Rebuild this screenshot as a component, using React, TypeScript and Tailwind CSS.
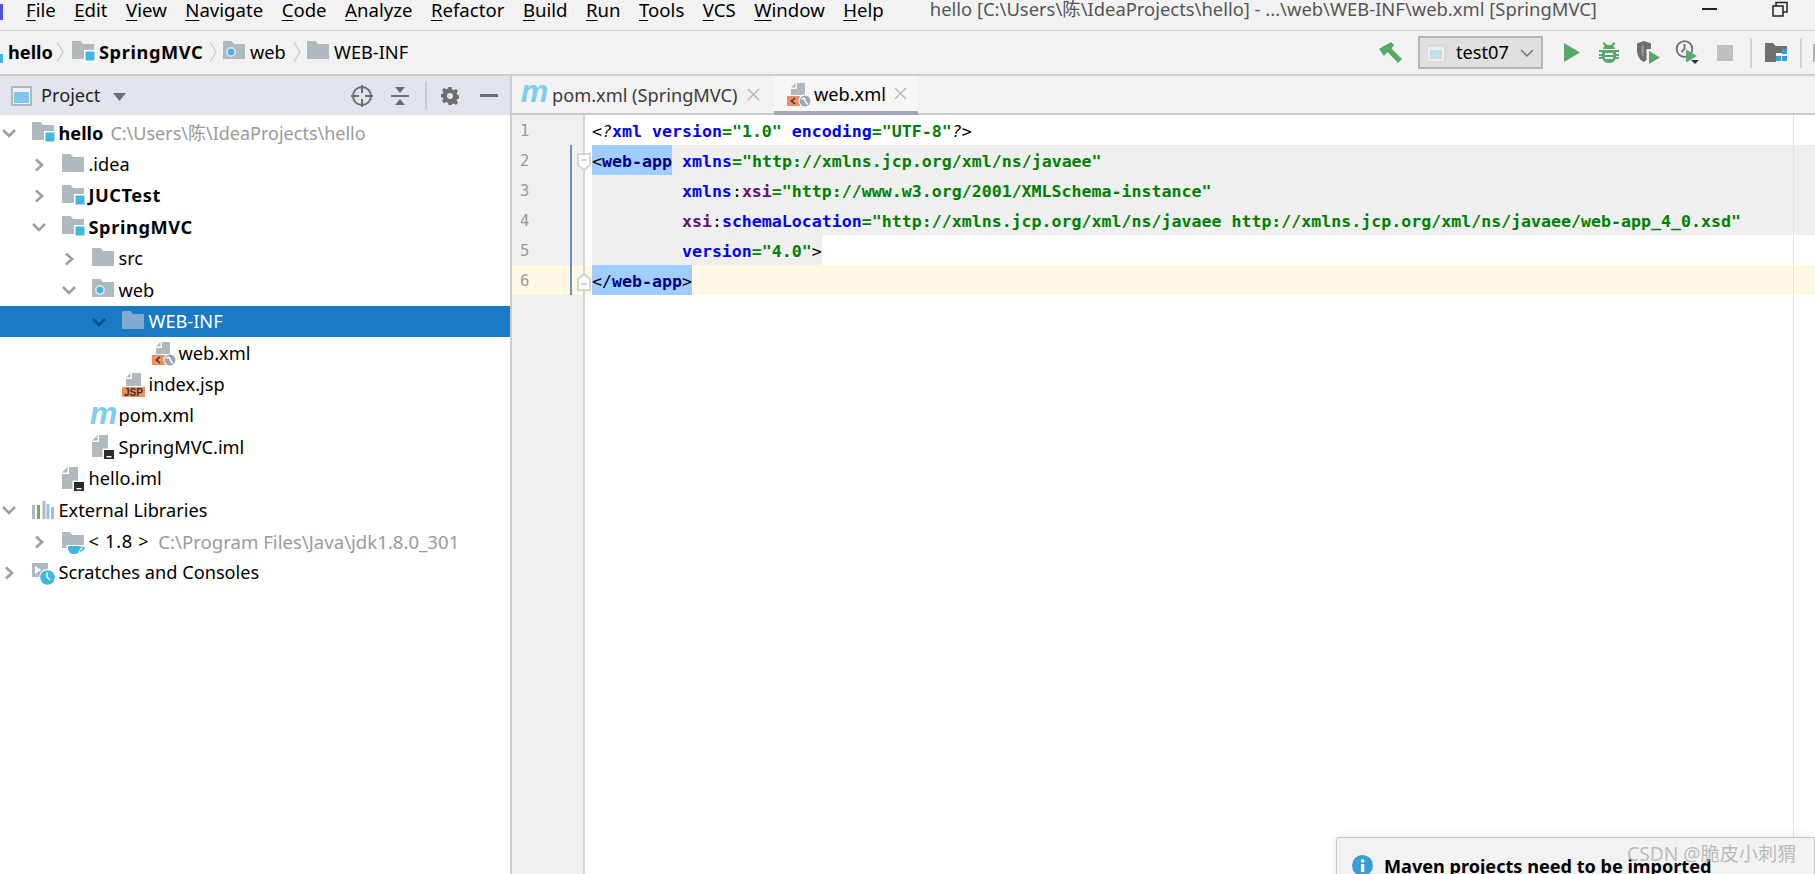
import React from "react";

const FolderPath = "M0 1a1 1 0 0 1 1-1h7.5l2.5 3h11v15H0z";

function Folder({ kind, fill = "#aeb9c0" }: { kind?: "module" | "web"; fill?: string }) {
  return (
    <svg width="25" height="22" viewBox="0 0 25 22" className="shrink-0">
      <path d={FolderPath} fill={fill} />
      {kind === "module" && (
        <>
          <rect x="12" y="9" width="13" height="13" fill="#fff" />
          <rect x="13.5" y="10.5" width="9" height="9" fill="#40b6e0" />
        </>
      )}
      {kind === "web" && (
        <>
          <circle cx="8" cy="11" r="5" fill="#d9e2e8" />
          <circle cx="8" cy="11" r="3.2" fill="#40b6e0" />
        </>
      )}
    </svg>
  );
}

function Chevron({ open, color = "#9aa1a6" }: { open?: boolean; color?: string }) {
  return (
    <svg width="14" height="14" viewBox="0 0 14 14" className="shrink-0">
      {open ? (
        <path d="M1 4l6 6 6-6" stroke={color} strokeWidth="2.6" fill="none" />
      ) : (
        <path d="M4 1.5l6 5.5-6 5.5" stroke={color} strokeWidth="2.6" fill="none" />
      )}
    </svg>
  );
}

function XmlFile() {
  return (
    <svg width="25" height="26" viewBox="0 0 25 26" className="shrink-0">
      <path d="M10 2h8v12H4V8h6z" fill="#aeb9c0" />
      <path d="M4 6.500L8.500 2v4.500z" fill="#aeb9c0" />
      <rect x="0" y="15" width="13" height="10" fill="#f08d63" />
      <path d="M8 17l-3.500 3 3.500 3" stroke="#3b3b3b" strokeWidth="1.600" fill="none" />
      <circle cx="18" cy="20" r="6.500" fill="#fff" />
      <circle cx="18" cy="20" r="5.500" fill="#9aa7b0" />
      <path d="M14.500 18.500c2-2.500 3.500-.5 3.500 1s2 2 2.500 4" stroke="#fff" strokeWidth="1.500" fill="none" />
    </svg>
  );
}

function JspFile() {
  return (
    <svg width="24" height="26" viewBox="0 0 24 26" className="shrink-0">
      <path d="M10 1h9v13H4V7h6z" fill="#aeb9c0" />
      <path d="M4 5.500L8.500 1v4.500z" fill="#aeb9c0" />
      <rect x="0" y="15" width="23" height="10" fill="#f08d63" />
      <text x="11.500" y="24" textAnchor="middle" fontSize="10" fontWeight="700" fontFamily="Liberation Sans" fill="#3d3026">JSP</text>
    </svg>
  );
}

function ImlFile() {
  return (
    <svg width="22" height="24" viewBox="0 0 22 24" className="shrink-0">
      <path d="M7 0h9v22H0V7h7z" fill="#aeb9c0" />
      <path d="M0 5.500L5.500 0v5.500z" fill="#aeb9c0" />
      <rect x="10.500" y="13.500" width="11.500" height="10.500" fill="#fff" />
      <rect x="12" y="15" width="10" height="9.500" fill="#2a2a2a" />
      <rect x="14.500" y="21" width="5" height="1.400" fill="#fff" />
    </svg>
  );
}

function MavenIcon() {
  return (
    <span className="w-[23px] h-[22px] shrink-0 flex items-center justify-center font-['Liberation_Sans'] italic font-bold text-[31px] leading-none text-[#7fcdec] -translate-y-[3px]">
      m
    </span>
  );
}

function LibIcon() {
  return (
    <svg width="22" height="18" viewBox="0 0 22 18" className="shrink-0">
      <rect x="0" y="4" width="3" height="14" fill="#aeb9c0" />
      <rect x="5" y="4" width="3" height="14" fill="#6bb04e" />
      <rect x="10.500" y="0" width="3" height="18" fill="#aeb9c0" />
      <rect x="14.500" y="3" width="3" height="15" fill="#8fc7e4" />
      <rect x="19" y="6" width="3" height="12" fill="#aeb9c0" />
    </svg>
  );
}

function JdkIcon() {
  return (
    <svg width="24" height="26" viewBox="0 0 24 26" className="shrink-0">
      <path d="M0 3h8l2.500 3H22v13H0z" fill="#aeb9c0" />
      <rect x="4.500" y="16" width="19.500" height="10" fill="#fff" />
      <path d="M6 17h12v2c0 3-2 6-5 6h-2c-3 0-5-3-5-6z" fill="#40b6e0" />
      <path d="M18 18.500h3.500c1 0 1 2.500-3.500 3.500" stroke="#40b6e0" strokeWidth="1.500" fill="none" />
    </svg>
  );
}

function ScratchIcon() {
  return (
    <svg width="25" height="26" viewBox="0 0 25 26" className="shrink-0">
      <path d="M0 3h16v14H0z" fill="#aeb9c0" />
      <path d="M3 6l6 4-6 4z" fill="#fff" />
      <circle cx="15.500" cy="17.500" r="8.500" fill="#fff" />
      <circle cx="15.500" cy="17.500" r="7.300" fill="#40b6e0" />
      <path d="M15 12.500V17l3 3" stroke="#fff" strokeWidth="1.400" fill="none" />
    </svg>
  );
}

type Row = {
  pl: string;
  chevron?: "open" | "closed";
  icon: React.ReactNode;
  name: string;
  nameClass?: string;
  hint?: string;
  hintClass?: string;
  selected?: boolean;
};

const rows: Row[] = [
  { pl: "pl-[2px]", chevron: "open", icon: <Folder kind="module" />, name: "hello", nameClass: "font-bold", hint: "C:\\Users\\陈\\IdeaProjects\\hello", hintClass: "ml-[7px] text-[18px]" },
  { pl: "pl-[32px]", chevron: "closed", icon: <Folder />, name: ".idea" },
  { pl: "pl-[32px]", chevron: "closed", icon: <Folder kind="module" />, name: "JUCTest", nameClass: "font-bold tracking-[0.55px]" },
  { pl: "pl-[32px]", chevron: "open", icon: <Folder kind="module" />, name: "SpringMVC", nameClass: "font-bold tracking-[0.6px]" },
  { pl: "pl-[62px]", chevron: "closed", icon: <Folder />, name: "src" },
  { pl: "pl-[62px]", chevron: "open", icon: <Folder kind="web" />, name: "web" },
  { pl: "pl-[92px]", chevron: "open", icon: <Folder fill="#82a9cf" />, name: "WEB-INF", selected: true },
  { pl: "pl-[122px]", icon: <XmlFile />, name: "web.xml" },
  { pl: "pl-[92px]", icon: <JspFile />, name: "index.jsp" },
  { pl: "pl-[62px]", icon: <MavenIcon />, name: "pom.xml" },
  { pl: "pl-[62px]", icon: <ImlFile />, name: "SpringMVC.iml" },
  { pl: "pl-[32px]", icon: <ImlFile />, name: "hello.iml" },
  { pl: "pl-[2px]", chevron: "open", icon: <LibIcon />, name: "External Libraries" },
  { pl: "pl-[32px]", chevron: "closed", icon: <JdkIcon />, name: "< 1.8 >", nameClass: "tracking-[0.7px]", hint: "C:\\Program Files\\Java\\jdk1.8.0_301", hintClass: "ml-[9px] text-[18.6px]" },
  { pl: "pl-[2px]", chevron: "closed", icon: <ScratchIcon />, name: "Scratches and Consoles" },
];

const menus: [string, string][] = [
  ["F", "ile"], ["E", "dit"], ["V", "iew"], ["N", "avigate"], ["C", "ode"], ["A", "nalyze"],
  ["R", "efactor"], ["B", "uild"], ["R", "un"], ["T", "ools"], ["V", "CS"], ["W", "indow"], ["H", "elp"],
];

const N = "text-[#000080] font-bold";
const A = "text-[#0000ff] font-bold";
const S = "text-[#008000] font-bold";
const P = "text-[#660e7a] font-bold";
const K = "text-black";

function T({ c, children }: { c: string; children: React.ReactNode }) {
  return <span className={`relative top-[2px] ${c}`}>{children}</span>;
}

function Sep() {
  return (
    <svg width="8" height="22" viewBox="0 0 8 22" className="shrink-0">
      <path d="M1 1l6 10-6 10" stroke="#c8c8c8" strokeWidth="1.200" fill="none" />
    </svg>
  );
}

function CodeRow({
  num,
  gutterBg = "bg-[#f0f0f0]",
  bg = "bg-white",
  children,
}: {
  num: number;
  gutterBg?: string;
  bg?: string;
  children: React.ReactNode;
}) {
  return (
    <div className="flex h-[30px]">
      <div className={`w-[71px] shrink-0 pl-[8px] pt-[3px] flex items-center font-['DejaVu_Sans_Mono'] text-[15.5px] text-[#999999] ${gutterBg}`}>
        {num}
      </div>
      <div className="w-[2px] shrink-0 bg-[#d5d5d5]" />
      <div className={`w-[7px] shrink-0 ${num === 6 ? "bg-[#fff8e3]" : "bg-white"}`} />
      <div className={`flex-1 flex items-center whitespace-pre font-['DejaVu_Sans_Mono'] text-[16.6px] ${bg}`}>{children}</div>
    </div>
  );
}

export default function App() {
  return (
    <div className="relative w-[1815px] h-[874px] overflow-hidden bg-white font-['Noto_Sans','Noto_Sans_CJK_SC',sans-serif] text-black">
      {/* Title and menu */}
      <div className="h-[31px] bg-[#f2f2f2] border-b border-[#cfcfcf] flex items-start relative">
        <div className="w-[3px] h-[16px] mt-[4px] bg-[#4a55e0] shrink-0" />
        <div className="flex ml-[23px] gap-[18.5px] text-[18.6px] leading-[22px] -mt-[1px]">
          {menus.map(([u, r], i) => (
            <span key={i}>
              <span className="underline underline-offset-[3px]">{u}</span>
              {r}
            </span>
          ))}
        </div>
        <div className="ml-[46px] text-[18.4px] leading-[20px] -mt-[1px] text-[#555555] whitespace-nowrap">
          hello [C:\Users\陈\IdeaProjects\hello] - ...\web\WEB-INF\web.xml [SpringMVC]
        </div>
        <div className="ml-auto flex items-center h-[18px] gap-[55px] pr-[27px]">
          <div className="w-[15px] h-[1.5px] bg-[#222]" />
          <svg width="16" height="16" viewBox="0 0 16 16">
            <path d="M1 5h10v10H1zM4 5V1.500h11V11h-4" fill="none" stroke="#222" strokeWidth="1.500" />
          </svg>
        </div>
      </div>

      {/* Breadcrumb and toolbar */}
      <div className="h-[43px] bg-[#f2f2f2] flex items-center relative">
        <div className="flex items-center text-[18.2px]">
          <svg width="3" height="22" viewBox="0 0 3 22" className="shrink-0 mt-[2px]">
            <rect x="0" y="12" width="3" height="9" fill="#40b6e0" />
          </svg>
          <span className="ml-[5px] w-[48px] font-bold">hello</span>
          <Sep />
          <span className="ml-[8px] flex"><Folder kind="module" /></span>
          <span className="ml-[2px] w-[110px] font-bold tracking-[0.6px]">SpringMVC</span>
          <Sep />
          <span className="ml-[6px] flex"><Folder kind="web" /></span>
          <span className="ml-[2px] w-[43px]">web</span>
          <Sep />
          <span className="ml-[6px] flex"><Folder /></span>
          <span className="ml-[2px]">WEB-INF</span>
        </div>
        <div className="ml-auto flex items-center">
          <svg width="24" height="24" viewBox="0 0 24 24">
            <path d="M1 8L13 1l3 3-2.500 3.500L24 18l-4 4L9.500 11 6 15z" fill="#59a869" />
          </svg>
          <div className="ml-[16px] w-[125px] h-[33px] bg-[#e0e0e0] border-2 border-[#b5b5b5] flex items-center pl-[7px]">
            <svg width="22" height="22" viewBox="0 0 22 22">
              <rect x="3" y="1" width="18" height="15" fill="#dcdcdc" />
              <rect x="0" y="4" width="18" height="16" fill="#ededed" stroke="#cfcfcf" />
              <rect x="3" y="8" width="12" height="9" fill="#c5dde6" />
            </svg>
            <span className="ml-[7px] text-[18.2px]">test07</span>
            <svg width="14" height="10" viewBox="0 0 14 10" className="ml-auto mr-[7px]"><path d="M1 2l6 6 6-6" stroke="#6e6e6e" strokeWidth="1.400" fill="none" /></svg>
          </div>
          <svg width="16" height="19" viewBox="0 0 16 19" className="ml-[21px]"><path d="M0 0l16 9.500L0 19z" fill="#59a869" /></svg>
          <svg width="20" height="22" viewBox="0 0 20 22" className="ml-[19px]">
            <path d="M5 0l3 3h4l3-3 1.500 1.500L14 4c1 .7 1.700 1.500 2 3H4c.3-1.500 1-2.300 2-3L3.500 1.500zM0 8h20v2h-3v2h3v2h-3v1h3v2h-3.500c-1 2.500-3.500 4-6.500 4s-5.500-1.500-6.500-4H0v-2h3v-1H0v-2h3v-2H0zM6 11v2h8v-2zM6 15v2h8v-2z" fill="#59a869" />
          </svg>
          <svg width="24" height="24" viewBox="0 0 24 24" className="ml-[18px]">
            <path d="M0 2.500L7 0l7 2.500V8H9.500v11l-2.500 2C3 19 0 15 0 9z" fill="#6e6e6e" />
            <path d="M4 4.500l3-1v13c-2-1.500-3-4-3-7z" fill="#8f8f8f" />
            <path d="M12 10l11 6.500L12 23z" fill="#59a869" />
          </svg>
          <svg width="26" height="26" viewBox="0 0 26 26" className="ml-[14px]">
            <circle cx="9.500" cy="9" r="7.800" stroke="#6e6e6e" strokeWidth="1.800" fill="none" />
            <path d="M9.500 4v5l-3 3" stroke="#6e6e6e" strokeWidth="1.800" fill="none" />
            <path d="M11 9.500l11 6.500-11 6.500z" fill="#59a869" />
            <path d="M16 20h8l-4 4z" fill="#333" />
          </svg>
          <div className="ml-[16px] w-[16px] h-[16px] bg-[#c0c0c0]" />
          <div className="ml-[17px] w-[2px] h-[30px] bg-[#d2d2d2]" />
          <svg width="22" height="19" viewBox="0 0 22 19" className="ml-[13px]">
            <path d="M0 0h8l2.500 3H22v7H11v9H0z" fill="#6e6e6e" />
            <rect x="17" y="6" width="5" height="5" fill="#389fd6" />
            <rect x="11" y="13" width="5" height="5" fill="#389fd6" />
            <rect x="17" y="13" width="5" height="5" fill="#389fd6" />
          </svg>
          <div className="ml-[13px] w-[2px] h-[30px] bg-[#d2d2d2]" />
          <div className="ml-[11px] w-[2px] h-[18px] bg-[#b0b0b0]" />
        </div>
      </div>

      {/* Main */}
      <div className="h-[800px] flex border-t-2 border-[#cdcdcd]">
        {/* Project panel */}
        <div className="w-[510px] shrink-0 flex flex-col">
          <div className="h-[39px] bg-[#e1e4ec] flex items-center">
            <svg width="21" height="20" viewBox="0 0 21 20" className="ml-[11px]">
              <rect x="0" y="0" width="21" height="20" fill="#aeb9c0" />
              <rect x="2" y="2" width="17" height="16" fill="#eef1f5" />
              <rect x="3" y="6" width="15" height="11" fill="#7fc8e6" />
            </svg>
            <span className="ml-[9px] text-[18.2px] text-[#1f1f1f]">Project</span>
            <svg width="13" height="8" viewBox="0 0 13 8" className="ml-[13px] mt-[2px]"><path d="M0 0h13L6.500 8z" fill="#6e6e6e" /></svg>
            <svg width="22" height="22" viewBox="0 0 22 22" className="ml-[225px]">
              <circle cx="11" cy="11" r="9" stroke="#6e6e6e" strokeWidth="2" fill="none" />
              <path d="M11 0v8M11 14v8M0 11h8M14 11h8" stroke="#6e6e6e" strokeWidth="2" />
            </svg>
            <svg width="18" height="20" viewBox="0 0 18 20" className="ml-[18px]">
              <path d="M0 10h18" stroke="#6e6e6e" strokeWidth="2" />
              <path d="M4 1h10L9 7zM4 19h10l-5-6z" fill="#6e6e6e" />
            </svg>
            <div className="ml-[16px] w-[2px] h-[29px] bg-[#c9ccd3]" />
            <svg width="18" height="20" viewBox="0 0 24 24" className="ml-[14px]">
              <path fill="#6e6e6e" d="M10 0h4l.7 3.300 2.300 1 2.900-1.800 2.800 2.800-1.800 2.900 1 2.300 3.100.7v4l-3.100.7-1 2.300 1.800 2.900-2.800 2.800-2.900-1.800-2.300 1L14 24h-4l-.7-3.100-2.300-1-2.900 1.800-2.800-2.800 1.800-2.900-1-2.300L-1 14v-4l3.100-.7 1-2.300-1.800-2.900 2.800-2.800L7 3.100l2.300-1zM12 8a4 4 0 1 0 0 8 4 4 0 0 0 0-8z" />
            </svg>
            <div className="ml-[21px] w-[18px] h-[3px] bg-[#6e6e6e]" />
          </div>
          <div className="pt-[2.5px]">
            {rows.map((r) => (
              <div
                key={r.name}
                className={`h-[31.43px] flex items-center whitespace-nowrap text-[18.2px] ${r.pl} ${r.selected ? "bg-[#1a7ac4] text-white" : ""}`}
              >
                <div className="w-[30px] shrink-0 flex items-center">
                  {r.chevron && <Chevron open={r.chevron === "open"} color={r.selected ? "#0e4f86" : "#9aa1a6"} />}
                </div>
                <div className="w-[26.5px] shrink-0 flex items-center">{r.icon}</div>
                <span className={r.nameClass ?? ""}>{r.name}</span>
                {r.hint && <span className={`text-[#9a9a9a] ${r.hintClass}`}>{r.hint}</span>}
              </div>
            ))}
          </div>
        </div>

        {/* Editor */}
        <div className="flex-1 flex flex-col border-l-2 border-[#cdcdcd] relative">
          <div className="h-[39px] bg-[#f2f2f2] border-b-2 border-[#c9c9c9] flex items-stretch">
            <div className="flex items-center pl-[11px] w-[262px] shrink-0">
              <MavenIcon />
              <span className="ml-[6px] mt-[2px] text-[18.2px] text-[#3a3a3a]">pom.xml (SpringMVC)</span>
              <svg width="13" height="13" viewBox="0 0 13 13" className="ml-[9px]"><path d="M1 1l11 11M12 1L1 12" stroke="#b5b5b5" strokeWidth="1.400" /></svg>
            </div>
            <div className="flex items-center pl-[13px] w-[144px] shrink-0 bg-[#f7f7f7] border-b-4 border-[#a0a9b8] -mb-[2px]">
              <XmlFile />
              <span className="ml-[2px] mt-[2px] text-[18.2px]">web.xml</span>
              <svg width="13" height="13" viewBox="0 0 13 13" className="ml-[8px]"><path d="M1 1l11 11M12 1L1 12" stroke="#b5b5b5" strokeWidth="1.400" /></svg>
            </div>
          </div>
          <div className="flex-1 relative bg-white">
            <CodeRow num={1}>
              <T c={K}>&lt;<i>?</i></T>
              <T c={A}>xml version</T>
              <T c={S}>="1.0"</T>
              <T c={A}> encoding</T>
              <T c={S}>="UTF-8"</T>
              <T c={K}><i>?</i>&gt;</T>
            </CodeRow>
            <CodeRow num={2} bg="bg-[#efefef]">
              <span className="bg-[#9fcdff] h-[30px] flex items-center w-[80px]">
                <T c={K}>&lt;</T>
                <T c={N}>web-app</T>
              </span>
              <T c={A}> xmlns</T>
              <T c={S}>="http://xmlns.jcp.org/xml/ns/javaee"</T>
            </CodeRow>
            <CodeRow num={3} bg="bg-[#efefef]">
              <T c={A}>         xmlns</T>
              <T c={K}>:</T>
              <T c={P}>xsi</T>
              <T c={S}>="http://www.w3.org/2001/XMLSchema-instance"</T>
            </CodeRow>
            <CodeRow num={4} bg="bg-[#efefef]">
              <T c={P}>         xsi</T>
              <T c={K}>:</T>
              <T c={A}>schemaLocation</T>
              <T c={S}>="http://xmlns.jcp.org/xml/ns/javaee http://xmlns.jcp.org/xml/ns/javaee/web-app_4_0.xsd"</T>
            </CodeRow>
            <CodeRow num={5}>
              <span className="bg-[#efefef] h-[30px] w-[230px] flex items-center">
                <T c={A}>         version</T>
                <T c={S}>="4.0"</T>
                <T c={K}>&gt;</T>
              </span>
            </CodeRow>
            <CodeRow num={6} gutterBg="bg-[#fff8e3]" bg="bg-[#fff8e3]">
              <span className="bg-[#9fcdff] h-[30px] w-[100px] flex items-center">
                <T c={K}>&lt;/</T>
                <T c={N}>web-app</T>
                <T c={K}>&gt;</T>
              </span>
            </CodeRow>
            <div className="absolute left-0 bottom-0 top-[180px] w-[71px] bg-[#f0f0f0]" />
            <div className="absolute bottom-0 left-[71px] w-[2px] top-[180px] bg-[#d5d5d5]" />
            <div className="absolute left-[1281px] inset-y-0 w-[1px] bg-[#e2e2e2]" />
            <div className="absolute left-[58px] top-[30px] w-[2px] h-[150px] bg-[#6f8fb5]" />
            <svg width="14" height="18" viewBox="0 0 14 18" className="absolute left-[65px] top-[38px]">
              <path d="M1 1h12v11l-6 5-6-5z" fill="#fff" stroke="#d5d5d5" strokeWidth="2" />
              <path d="M4 7h6" stroke="#bbb" strokeWidth="1.300" />
            </svg>
            <svg width="14" height="18" viewBox="0 0 14 18" className="absolute left-[65px] top-[158px]">
              <path d="M1 17h12V6L7 1 1 6z" fill="#fff" stroke="#d5d5d5" strokeWidth="2" />
              <path d="M4 11h6" stroke="#bbb" strokeWidth="1.300" />
            </svg>
          </div>
        </div>
      </div>

      {/* Notification */}
      <div className="absolute left-[1336px] top-[837px] w-[479px] h-[60px] bg-[#f2f2f2] border border-[#c9c9c9] rounded-tl-[3px] shadow-[0_0_8px_rgba(0,0,0,0.12)] flex items-start pt-[17px] pl-[15px]">
        <svg width="21" height="21" viewBox="0 0 21 21">
          <circle cx="10.500" cy="10.500" r="10.500" fill="#389fd6" />
          <rect x="9" y="9" width="3.200" height="8" fill="#fff" />
          <rect x="9" y="4.500" width="3.200" height="3" fill="#fff" />
        </svg>
        <span className="ml-[11px] font-bold text-[18.1px] leading-[22px] whitespace-nowrap">Maven projects need to be imported</span>
      </div>

      {/* Watermark */}
      <div className="absolute left-[1627px] top-[842px] text-[19.2px] leading-[24px] text-[#b4b4b4]/90 whitespace-nowrap">
        CSDN @脆皮小刺猬
      </div>
    </div>
  );
}
